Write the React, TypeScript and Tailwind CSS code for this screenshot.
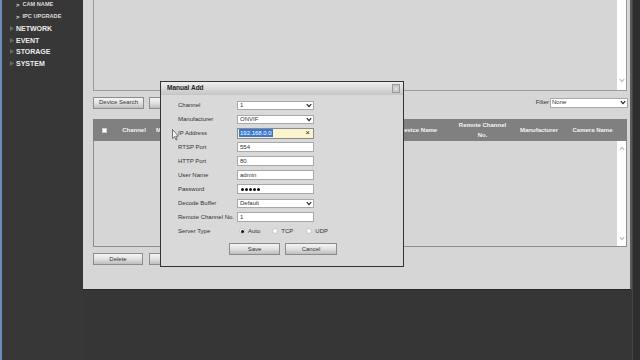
import { ReactNode } from "react";

const font = "font-['Liberation_Sans',Arial,sans-serif]";

function Chevron({ color = "#222", up = false }: { color?: string; up?: boolean }) {
  return (
    <svg width="6" height="5" viewBox="0 0 6 5" className="shrink-0">
      <polyline
        points={up ? "0.8,3.8 3,1.4 5.2,3.8" : "0.8,1.2 3,3.6 5.2,1.2"}
        fill="none"
        stroke={color}
        strokeWidth="1.2"
      />
    </svg>
  );
}

function GrayButton({ label, className = "" }: { label: string; className?: string }) {
  return (
    <div
      className={`flex items-center justify-center h-[12px] border border-[#8c8c8c] bg-gradient-to-b from-[#f4f4f4] via-[#e2e2e2] to-[#bdbdbd] text-[6px] text-[#333] ${className}`}
    >
      {label}
    </div>
  );
}

function SideItem({ label, sub }: { label: string; sub?: boolean }) {
  if (sub) {
    return (
      <div className="flex items-center h-[12px] pl-[14px] gap-[3px]">
        <span className="text-[6px] font-bold text-[#e6e6e6] leading-none">&gt;</span>
        <span className="text-[5.6px] font-bold text-[#dcdcdc] leading-none">{label}</span>
      </div>
    );
  }
  return (
    <div className="flex items-center h-[11.5px] pl-[8px] gap-[2px]">
      <svg width="4" height="5" viewBox="0 0 4 5">
        <polygon points="0,0 4,2.5 0,5" fill="#6a6a6a" />
      </svg>
      <span className="text-[7px] font-bold text-[#ececec] leading-none">{label}</span>
    </div>
  );
}

function Row({ label, children }: { label: string; children: ReactNode }) {
  return (
    <div className="flex items-center h-[14px]">
      <div className="w-[59px] text-[6px] text-[#333] leading-none">{label}</div>
      {children}
    </div>
  );
}

function TextInput({ value }: { value: ReactNode }) {
  return (
    <div className="flex items-center w-[77px] h-[10px] bg-white border border-[#a8a8a8] pl-[2px] text-[6px] text-[#333] leading-none">
      {value}
    </div>
  );
}

function SelectInput({ value }: { value: string }) {
  return (
    <div className="flex items-center justify-between w-[77px] h-[9px] bg-white border border-[#a8a8a8] pl-[2px] pr-[1px] text-[6px] text-[#333] leading-none">
      <span>{value}</span>
      <Chevron />
    </div>
  );
}

function Radio({ label, checked }: { label: string; checked?: boolean }) {
  return (
    <div className="flex items-center gap-[3px]">
      <div className="flex items-center justify-center w-[6px] h-[6px] rounded-full bg-white border border-[#c4c4c4]">
        {checked && <div className="w-[3px] h-[3px] rounded-full bg-[#111]" />}
      </div>
      <span className="text-[6px] text-[#333] leading-none">{label}</span>
    </div>
  );
}

export default function App() {
  return (
    <div className={`relative flex w-[640px] h-[360px] overflow-hidden bg-[#363636] ${font}`}>
      {/* sidebar */}
      <aside className="w-[83px] h-full border-l-[2px] border-[#6f8db8] bg-[#373737]">
        <div className="-mt-[1px]">
          <SideItem label="CAM NAME" sub />
          <SideItem label="IPC UPGRADE" sub />
          <SideItem label="NETWORK" />
          <SideItem label="EVENT" />
          <SideItem label="STORAGE" />
          <SideItem label="SYSTEM" />
        </div>
      </aside>

      {/* main panel */}
      <div className="flex flex-col">
        <main className="w-[549px] h-[290px] bg-[#d6d6d6] border-r-[2px] border-r-[#5a5a5a] border-b border-b-[#262626] pl-[10px] flex flex-col">
          <div className="flex w-[534px] h-[91px] border-x border-b border-[#9a9a9a]">
            <div className="flex-1" />
            <div className="w-[9px] bg-white flex flex-col justify-end items-center pb-[7px]">
              <Chevron color="#bbb" />
            </div>
          </div>

          <div className="flex items-center h-[11px] mt-[6px] w-[535px]">
            <GrayButton label="Device Search" className="w-[51px] h-[11px]" />
            <GrayButton label="" className="w-[51px] h-[11px] ml-[5px]" />
            <div className="flex-1" />
            <span className="text-[6px] text-[#333] mr-[1px]">Filter</span>
            <div className="flex items-center justify-between w-[78px] h-[10px] bg-white border border-[#a8a8a8] pl-[1px] pr-[1px] text-[6px] text-[#333]">
              <span>None</span>
              <Chevron />
            </div>
          </div>

          <div className="mt-[11px] w-[534px]">
            <div className="grid grid-cols-[22px_38px_7px_1fr_53px_75px_38px_69px] items-center h-[22px] bg-[#808080] text-[6px] font-bold text-[#f4f4f4] text-center leading-[10px]">
              <div className="flex justify-center">
                <div className="w-[5px] h-[5px] bg-white border border-[#ccc]" />
              </div>
              <div>Channel</div>
              <div className="overflow-hidden whitespace-nowrap text-left pl-[3px]">M</div>
              <div />
              <div>Device Name</div>
              <div>
                Remote Channel
                <br />
                No.
              </div>
              <div>Manufacturer</div>
              <div>Camera Name</div>
            </div>
            <div className="flex h-[106px] border-x border-b border-[#8e8e8e]">
              <div className="flex-1" />
              <div className="w-[9px] bg-white flex flex-col justify-between items-center py-[5px]">
                <Chevron color="#bbb" up />
                <Chevron color="#bbb" />
              </div>
            </div>
          </div>

          <div className="flex items-center mt-[6px]">
            <GrayButton label="Delete" className="w-[50px]" />
            <GrayButton label="" className="w-[51px] ml-[6px]" />
          </div>
        </main>
      </div>
      <div className="flex-1 border-l border-[#444] bg-[#2f2f2f]" />

      {/* Manual Add dialog */}
      <div className="absolute left-[160px] top-[81px] w-[244px] h-[186px] border border-[#333] bg-[#d9d9d9] flex flex-col">
        <div className="flex items-center justify-between h-[13px] bg-gradient-to-b from-[#efefef] to-[#c4c4c4] pl-[6px] pr-[3px]">
          <span className="text-[6.5px] font-bold text-[#222] leading-none">Manual Add</span>
          <div className="flex items-center justify-center w-[8px] h-[9px] border border-[#9a9a9a] bg-[#c9c9c9] text-[7px] text-[#eee] leading-none">
            ×
          </div>
        </div>
        <div className="flex flex-col pl-[17px] pt-[3px]">
          <Row label="Channel">
            <SelectInput value="1" />
          </Row>
          <Row label="Manufacturer">
            <SelectInput value="ONVIF" />
          </Row>
          <Row label="IP Address">
            <div className="flex items-center justify-between w-[77px] h-[11px] bg-[#faf5cf] border border-[#8a8a8a] pl-[1px] pr-[3px] text-[6px] leading-none">
              <span className="bg-[#3b78d2] text-white px-[1px] py-[1px]">192.168.0.0</span>
              <span className="text-[8px] text-[#222] leading-none">×</span>
            </div>
          </Row>
          <Row label="RTSP Port">
            <TextInput value="554" />
          </Row>
          <Row label="HTTP Port">
            <TextInput value="80" />
          </Row>
          <Row label="User Name">
            <TextInput value="admin" />
          </Row>
          <Row label="Password">
            <TextInput
              value={
                <div className="flex gap-[1px] pl-[1px]">
                  {[0, 1, 2, 3, 4].map((i) => (
                    <div key={i} className="w-[3px] h-[3px] rounded-full bg-[#111]" />
                  ))}
                </div>
              }
            />
          </Row>
          <Row label="Decode Buffer">
            <SelectInput value="Default" />
          </Row>
          <Row label="Remote Channel No.">
            <TextInput value="1" />
          </Row>
          <Row label="Server Type">
            <div className="flex items-center pl-[2px]">
              <Radio label="Auto" checked />
              <div className="ml-[12px]">
                <Radio label="TCP" />
              </div>
              <div className="ml-[13px]">
                <Radio label="UDP" />
              </div>
            </div>
          </Row>
          <div className="flex gap-[5px] pl-[51px] mt-[5px]">
            <GrayButton label="Save" className="w-[51px]" />
            <GrayButton label="Cancel" className="w-[52px]" />
          </div>
        </div>
      </div>

      {/* mouse cursor */}
      <svg className="absolute left-[172px] top-[129px]" width="7" height="12" viewBox="0 0 7 12">
        <path d="M0.5 0.5 L0.5 9.5 L2.6 7.6 L4 11 L5.2 10.5 L3.8 7.2 L6.5 7.2 Z" fill="#f4f4f4" stroke="#555" strokeWidth="0.8" />
      </svg>
    </div>
  );
}
